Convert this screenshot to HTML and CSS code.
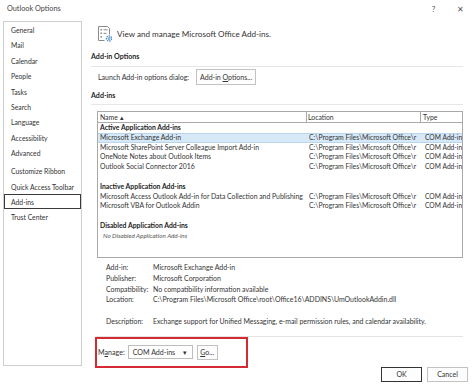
FILE: index.html
```html
<!DOCTYPE html>
<html lang="en">
  <head>
    <meta charset="UTF-8" />
    <title>Outlook Options</title>
    <link rel="stylesheet" href="styles.css">
  </head>
  <body>
    <header class="titlebar">
      <span class="title">Outlook Options</span>
      <span class="tbtn help">?</span>
      <span class="tbtn close">&#x2715;</span>
    </header>
    <div class="dialog">
      <nav class="nav">
        <div class="navItem">General</div>
        <div class="navItem">Mail</div>
        <div class="navItem">Calendar</div>
        <div class="navItem">People</div>
        <div class="navItem">Tasks</div>
        <div class="navItem">Search</div>
        <div class="navItem">Language</div>
        <div class="navItem">Accessibility</div>
        <div class="navItem">Advanced</div>
        <div class="navItem navGroup">Customize Ribbon</div>
        <div class="navItem">Quick Access Toolbar</div>
        <div class="navItem selected">Add-ins</div>
        <div class="navItem">Trust Center</div>
      </nav>
      <main class="main">
        <div class="intro">
          <svg class="introIcon" width="16" height="18" viewBox="0 0 16 18">
            <path d="M1.5 1.5h9l2 2v6" fill="none" stroke="#8a8a8a" />
            <path d="M1.5 1.5v14h6" fill="none" stroke="#8a8a8a" />
            <rect x="3.5" y="4" width="1.5" height="1.5" fill="#8a8a8a" />
            <rect x="3.5" y="7.5" width="1.5" height="1.5" fill="#8a8a8a" />
            <rect x="3.5" y="11" width="1.5" height="1.5" fill="#8a8a8a" />
            <path d="M6.5 4.8h4M6.5 8.3h3" stroke="#8a8a8a" />
            <circle cx="12" cy="13.5" r="2.6" fill="none" stroke="#3b83c4" stroke-width="1.2" stroke-dasharray="1.4 0.9" />
            <circle cx="12" cy="13.5" r="1" fill="none" stroke="#3b83c4" stroke-width="0.9" />
          </svg>
          <span class="introText">View and manage Microsoft Office Add-ins.</span>
        </div>

        <h2 class="sectionHead">Add-in Options</h2>
        <div class="launchRow">
          <span>Launch Add-in options dialog:</span>
          <button class="btn optBtn">Add-in <u>O</u>ptions...</button>
        </div>

        <h2 class="sectionHead addins">Add-ins</h2>
        <div class="table">
          <div class="row headRow">
            <span class="cName">Name &#x25B4;</span>
            <span class="cLoc">Location</span>
            <span class="cType">Type</span>
          </div>
          <div class="row group">Active Application Add-ins</div>
          <div class="row item current">
            <span class="cName">Microsoft Exchange Add-in</span>
            <span class="cLoc">C:\Program Files\Microsoft Office\r</span>
            <span class="cType">COM Add-in</span>
          </div>
          <div class="row item">
            <span class="cName">Microsoft SharePoint Server Colleague Import Add-in</span>
            <span class="cLoc">C:\Program Files\Microsoft Office\r</span>
            <span class="cType">COM Add-in</span>
          </div>
          <div class="row item">
            <span class="cName">OneNote Notes about Outlook Items</span>
            <span class="cLoc">C:\Program Files\Microsoft Office\r</span>
            <span class="cType">COM Add-in</span>
          </div>
          <div class="row item">
            <span class="cName">Outlook Social Connector 2016</span>
            <span class="cLoc">C:\Program Files\Microsoft Office\r</span>
            <span class="cType">COM Add-in</span>
          </div>
          <div class="row blank"></div>
          <div class="row group">Inactive Application Add-ins</div>
          <div class="row item">
            <span class="cName">Microsoft Access Outlook Add-in for Data Collection and Publishing</span>
            <span class="cLoc">C:\Program Files\Microsoft Office\r</span>
            <span class="cType">COM Add-in</span>
          </div>
          <div class="row item">
            <span class="cName">Microsoft VBA for Outlook Addin</span>
            <span class="cLoc">C:\Program Files\Microsoft Office\r</span>
            <span class="cType">COM Add-in</span>
          </div>
          <div class="row blank"></div>
          <div class="row group">Disabled Application Add-ins</div>
          <div class="row none">No Disabled Application Add-ins</div>
        </div>

        <div class="details">
          <span class="dLabel">Add-in:</span><span>Microsoft Exchange Add-in</span>
          <span class="dLabel">Publisher:</span><span>Microsoft Corporation</span>
          <span class="dLabel">Compatibility:</span><span>No compatibility information available</span>
          <span class="dLabel">Location:</span><span>C:\Program Files\Microsoft Office\root\Office16\ADDINS\UmOutlookAddin.dll</span>
          <span class="dLabel desc">Description:</span><span class="desc">Exchange support for Unified Messaging, e-mail permission rules, and calendar availability.</span>
        </div>

        <div class="rule"></div>
        <div class="manage">
          <span>M<u>a</u>nage:</span>
          <div class="select">COM Add-ins <span class="caret">&#x25BE;</span></div>
          <button class="btn goBtn"><u>G</u>o...</button>
        </div>

        <footer class="footer">
          <button class="btn okBtn">OK</button>
          <button class="btn">Cancel</button>
        </footer>
      </main>
    </div>
  </body>
</html>
```
FILE: styles.css
```css
html {
  font-family: Lato, sans-serif;
  color: #333;
}
body {
  margin: 0;
  background: #fff;
  width: 474px;
  height: 386px;
  overflow: hidden;
}
button {
  font-family: inherit;
}

/* title bar */
.titlebar {
  display: flex;
  align-items: center;
  height: 17px;
  padding: 0 0 4px 7px;
  font-size: 7.3px;
  color: #444;
}
.title {
  flex: 1;
}
.tbtn {
  width: 27px;
  text-align: center;
  font-size: 8px;
  color: #555;
}

/* layout */
.dialog {
  display: flex;
  padding-left: 3px;
}
.nav {
  flex: 0 0 77px;
  min-width: 0;
  height: 343px;
  border: 1px solid #cfcfcf;
  font-size: 6.8px;
}
.navItem {
  height: 15.4px;
  line-height: 15.4px;
  padding-left: 6px;
  border: 1px solid transparent;
  box-sizing: border-box;
  white-space: nowrap;
}
.navGroup {
  margin-top: 2.7px;
}
.navItem.selected {
  border-color: #3a3a3a;
}
.main {
  flex: 0 0 372px;
  min-width: 0;
  margin-left: 9px;
}

/* intro */
.intro {
  display: flex;
  align-items: center;
  height: 18px;
  padding: 4px 0 0 6px;
}
.introIcon {
  margin-right: 4px;
}
.introText {
  font-size: 8.1px;
  color: #333;
}

.sectionHead {
  margin: 8px 0 0;
  height: 12px;
  line-height: 12px;
  padding-bottom: 3px;
  border-bottom: 1px solid #e6e6e6;
  font-size: 7.1px;
  font-weight: 700;
  color: #262626;
}
.sectionHead.addins {
  margin-top: 5px;
  padding-bottom: 2px;
}
.launchRow {
  display: flex;
  align-items: center;
  height: 16px;
  margin-top: 2px;
  padding-left: 7px;
  font-size: 7px;
}
.btn {
  height: 16px;
  padding: 0;
  border: 1px solid #c2c2c2;
  background: #fdfdfd;
  font-size: 7px;
  color: #333;
}
.optBtn {
  width: 60px;
  margin-left: 7px;
}

/* add-in list */
.table {
  margin: 6px 0 0 6px;
  height: 147px;
  border: 1px solid #a9a9a9;
  box-sizing: border-box;
  font-size: 6.85px;
  overflow: hidden;
}
.row {
  display: flex;
  height: 9.8px;
  line-height: 9.8px;
  white-space: nowrap;
  box-sizing: border-box;
}
.row span {
  min-width: 0;
  overflow: hidden;
}
.cName {
  flex: 0 0 209px;
  padding-left: 2px;
}
.cLoc {
  flex: 0 0 114px;
  padding-left: 0;
}
.cType {
  flex: 1 1 0;
  padding-left: 2px;
}
.item .cType {
  font-size: 6.7px;
}
.headRow {
  height: 11px;
  line-height: 10px;
}
.headRow span {
  border: 1px solid #a9a9a9;
  border-width: 0 1px 1px 0;
  box-sizing: border-box;
}
.headRow .cLoc {
  padding-left: 1px;
}
.headRow .cType {
  border-right: 0;
  padding-left: 2px;
}
.group {
  padding-left: 2px;
  font-weight: 700;
  color: #222;
}
.current {
  background: #d7e8f7;
  border-top: 1px solid #b8d6ef;
  border-bottom: 1px solid #b8d6ef;
  line-height: 7.8px;
}
.none {
  padding-left: 5px;
  font-style: italic;
  font-size: 6.3px;
  color: #555;
}

/* details */
.details {
  display: grid;
  grid-template-columns: 47px 1fr;
  grid-auto-rows: 10.8px;
  margin-top: 4px;
  padding-left: 15px;
  font-size: 6.95px;
  line-height: 10.8px;
  white-space: nowrap;
}
.details .desc {
  margin-top: 11px;
}
.rule {
  margin: 20px 0 0 5px;
  border-top: 1px solid #e3e3e3;
}
.manage {
  display: flex;
  align-items: center;
  width: 148px;
  height: 27px;
  margin-left: 4px;
  border: 2px solid #d42a33;
  padding-left: 1px;
  font-size: 7.1px;
}
.select {
  display: flex;
  justify-content: space-between;
  align-items: center;
  width: 65px;
  height: 14px;
  margin-left: 3px;
  padding: 0 5px 0 4px;
  box-sizing: border-box;
  border: 1px solid #bdbdbd;
}
.caret {
  font-size: 7px;
}
.goBtn {
  width: 21px;
  height: 15px;
  margin-left: 4px;
}
.footer {
  display: flex;
  justify-content: flex-end;
  gap: 5px;
  margin: -1px -5px 0 0;
}
.footer .btn {
  width: 41px;
  height: 15px;
}
.footer .okBtn {
  border-color: #333;
}
```
